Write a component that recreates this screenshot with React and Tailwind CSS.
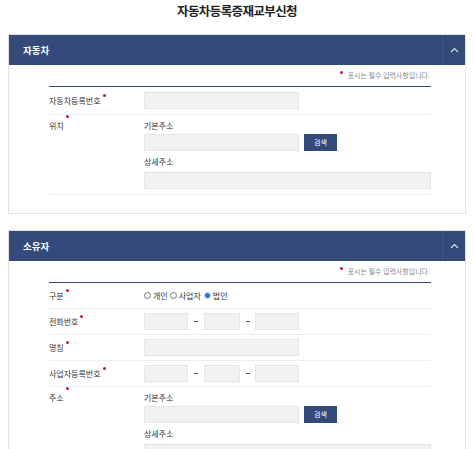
import React from "react";

const FONT = { fontFamily: '"Noto Sans CJK KR", "Noto Sans", sans-serif' };

function Req() {
  return <span className="inline-block w-[3px] h-[3px] rounded-full bg-[#d0142c] ml-[2px] -translate-y-[5px]" />;
}

function Label({ children, top }) {
  return (
    <div className={`w-[95px] shrink-0 text-[8px] text-[#333] flex ${top ? "items-start pt-[5px] leading-[12px]" : "items-center"}`}>
      <span>{children}</span>
      <Req />
    </div>
  );
}

function Input({ w }) {
  return <div className={`h-[17px] ${w} bg-[#f2f2f2] border border-[#e6e6e6]`} />;
}

function Header({ title }) {
  return (
    <div className="h-[30px] bg-[#344a7a] flex items-stretch justify-between">
      <div className="pl-[14px] flex items-center text-white font-bold text-[9.5px]">{title}</div>
      <div className="w-[23px] border-l border-[#42568a] flex items-center justify-center">
        <svg width="9" height="6" viewBox="0 0 9 6" fill="none">
          <path d="M1 5 L4.5 1.5 L8 5" stroke="#dfe4ee" strokeWidth="1.1" />
        </svg>
      </div>
    </div>
  );
}

function Required() {
  return (
    <div className="h-[21px] flex items-center justify-end text-[7px] text-[#8a8a8a] pr-[1px]">
      <span className="inline-block w-[3px] h-[3px] rounded-full bg-[#d0142c] mr-[5px] -translate-y-[3px]" />
      표시는 필수 입력사항입니다.
    </div>
  );
}

function Row({ children, h = "h-[26px]" }) {
  return <div className={`${h} flex items-center border-b border-[#eeeeee]`}>{children}</div>;
}

function Address({ label }) {
  return (
    <div className="flex items-start border-b border-[#eeeeee] pt-[5px] pb-[5px]">
      <div className="w-[95px] shrink-0 text-[8px] text-[#333] leading-[12px] flex items-start">
        <span>{label}</span>
        <Req />
      </div>
      <div className="flex-1 flex flex-col">
        <div className="h-[12px] leading-[12px] text-[8px] text-[#333] mb-[2px]">기본주소</div>
        <div className="flex items-center gap-[5px]">
          <Input w="w-[155px]" />
          <div className="h-[17px] w-[33px] bg-[#344a7a] text-white text-[7px] flex items-center justify-center">검색</div>
        </div>
        <div className="h-[12px] leading-[12px] text-[8px] text-[#333] mt-[5px] mb-[4px]">상세주소</div>
        <Input w="w-full" />
      </div>
    </div>
  );
}

function Radio({ on }) {
  return on ? (
    <span className="inline-block w-[7px] h-[7px] rounded-full bg-[#2f6fdc] border-[1.5px] border-[#cfe0fb] mr-[2px]" />
  ) : (
    <span className="inline-block w-[7px] h-[7px] rounded-full border border-[#777] mr-[2px]" />
  );
}

function Dash({ w }) {
  return (
    <span className={`${w} flex items-center justify-center`}>
      <span className="w-[4px] h-[1.5px] bg-[#555]" />
    </span>
  );
}

function Phone() {
  return (
    <div className="flex items-center">
      <Input w="w-[44px]" />
      <Dash w="w-[16px]" />
      <Input w="w-[36px]" />
      <Dash w="w-[15px]" />
      <Input w="w-[44px]" />
    </div>
  );
}

export default function App() {
  return (
    <div className="w-[474px] h-[449px] overflow-hidden bg-white" style={FONT}>
      <div className="h-[34px] pt-[2px] text-center text-[12.5px] font-bold text-[#222] leading-[17px] tracking-[-0.6px]">
        자동차등록증재교부신청
      </div>

      <div className="mx-[8px] border border-[#e2e2e2]">
        <Header title="자동차" />
        <div className="pl-[40px] pr-[34px] pb-[18px]">
          <Required />
          <div className="border-t border-[#3b4b70]" />
          <Row h="h-[28px]">
            <Label>자동차등록번호</Label>
            <Input w="w-[155px]" />
          </Row>
          <Address label="위치" />
        </div>
      </div>

      <div className="mx-[8px] mt-[16px] border border-[#e2e2e2]">
        <Header title="소유자" />
        <div className="pl-[40px] pr-[34px] pb-[20px]">
          <Required />
          <div className="border-t border-[#3b4b70]" />
          <Row>
            <Label>구분</Label>
            <div className="flex items-center text-[8px] text-[#333]">
              <Radio />
              <span className="mr-[2px]">개인</span>
              <Radio />
              <span className="mr-[3px]">사업자</span>
              <Radio on />
              <span>법인</span>
            </div>
          </Row>
          <Row>
            <Label>전화번호</Label>
            <Phone />
          </Row>
          <Row>
            <Label>명칭</Label>
            <Input w="w-[155px]" />
          </Row>
          <Row>
            <Label>사업자등록번호</Label>
            <Phone />
          </Row>
          <Address label="주소" />
        </div>
      </div>
    </div>
  );
}
